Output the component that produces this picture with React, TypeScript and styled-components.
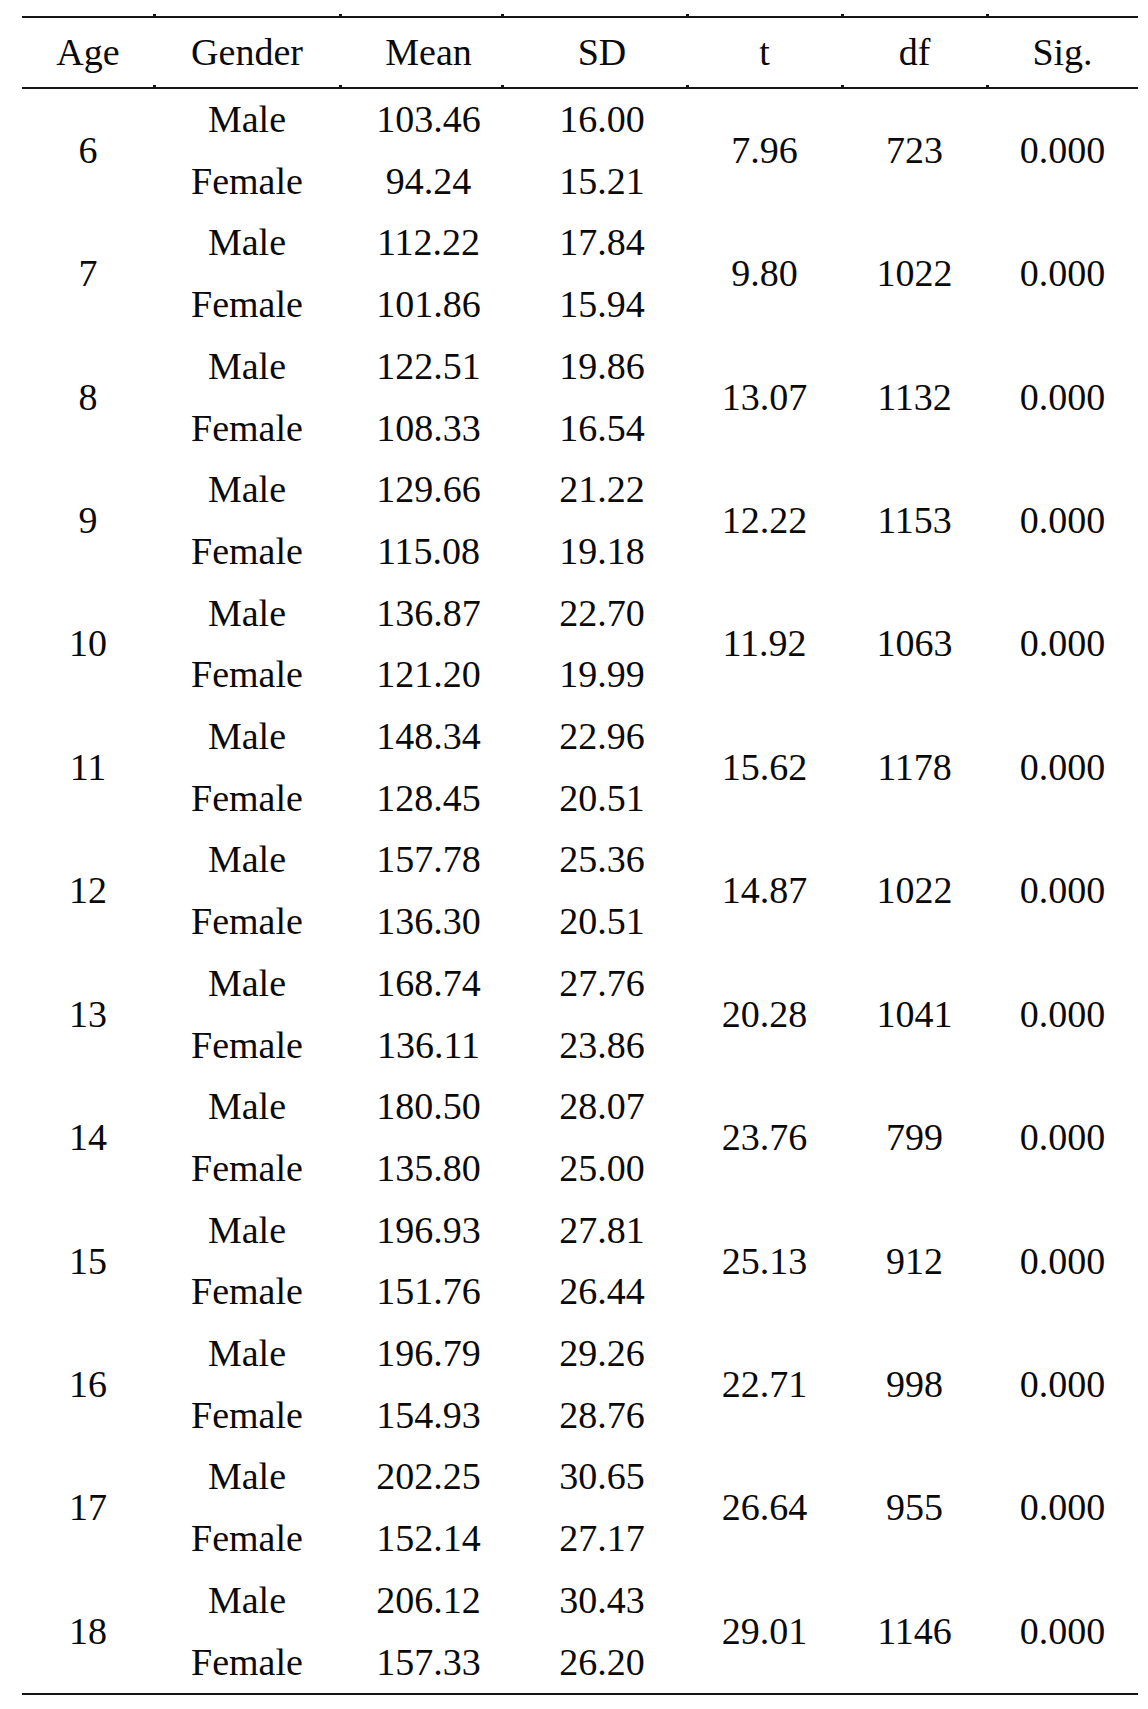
import styled, { createGlobalStyle } from "styled-components"

const GlobalStyle = createGlobalStyle`
    html, body {
        margin: 0;
        padding: 0;
        background: #ffffff;
    }
`

const Page = styled.div`
    padding: 16px 0 0 22px;
    font-family: "Liberation Serif", "Times New Roman", serif;
    color: #0a0a0a;
`

const Table = styled.table`
    width: 1116px;
    table-layout: fixed;
    border-collapse: separate;
    border-spacing: 0;
    font-size: 38px;
`

const HeadCell = styled.th<{ $tick?: boolean; $shift?: number }>`
    position: relative;
    height: 69px;
    padding: 0 0 0 ${p => p.$shift ?? 0}px;
    font-weight: normal;
    text-align: center;
    line-height: 69px;
    border-top: 2px solid #151515;
    border-bottom: 2px solid #151515;

    &::before, &::after {
        content: "";
        display: ${p => (p.$tick ? "block" : "none")};
        position: absolute;
        left: -1px;
        width: 3px;
        height: 2px;
        background: #151515;
    }
    &::before { top: -4px; }
    &::after { bottom: 0; }
`

const Cell = styled.td<{ $tick?: boolean; $last?: boolean; $shift?: number }>`
    position: relative;
    height: 61.7px;
    padding: 0 0 0 ${p => p.$shift ?? 0}px;
    text-align: center;
    vertical-align: middle;
    line-height: 61.7px;
    border-bottom: ${p => (p.$last ? "2px solid #151515" : "none")};

    &::after {
        content: "";
        display: ${p => (p.$tick && p.$last ? "block" : "none")};
        position: absolute;
        left: -1px;
        bottom: -4px;
        width: 3px;
        height: 2px;
        background: #151515;
    }
`

const widths = [132, 186, 162, 185, 155, 145, 151]
const shifts = [0, 0, 15, 15, 0, 0, 0]
const headers = ["Age", "Gender", "Mean", "SD", "t", "df", "Sig."]

const data = [
    { age: 6, m: ["103.46", "16.00"], f: ["94.24", "15.21"], t: "7.96", df: "723" },
    { age: 7, m: ["112.22", "17.84"], f: ["101.86", "15.94"], t: "9.80", df: "1022" },
    { age: 8, m: ["122.51", "19.86"], f: ["108.33", "16.54"], t: "13.07", df: "1132" },
    { age: 9, m: ["129.66", "21.22"], f: ["115.08", "19.18"], t: "12.22", df: "1153" },
    { age: 10, m: ["136.87", "22.70"], f: ["121.20", "19.99"], t: "11.92", df: "1063" },
    { age: 11, m: ["148.34", "22.96"], f: ["128.45", "20.51"], t: "15.62", df: "1178" },
    { age: 12, m: ["157.78", "25.36"], f: ["136.30", "20.51"], t: "14.87", df: "1022" },
    { age: 13, m: ["168.74", "27.76"], f: ["136.11", "23.86"], t: "20.28", df: "1041" },
    { age: 14, m: ["180.50", "28.07"], f: ["135.80", "25.00"], t: "23.76", df: "799" },
    { age: 15, m: ["196.93", "27.81"], f: ["151.76", "26.44"], t: "25.13", df: "912" },
    { age: 16, m: ["196.79", "29.26"], f: ["154.93", "28.76"], t: "22.71", df: "998" },
    { age: 17, m: ["202.25", "30.65"], f: ["152.14", "27.17"], t: "26.64", df: "955" },
    { age: 18, m: ["206.12", "30.43"], f: ["157.33", "26.20"], t: "29.01", df: "1146" },
]

export default function App() {
    return (
        <Page>
            <GlobalStyle />
            <Table>
                <colgroup>
                    {widths.map((w, i) => <col key={i} style={{ width: w }} />)}
                </colgroup>
                <thead>
                    <tr>
                        {headers.map((h, i) => (
                            <HeadCell key={h} $tick={i > 0} $shift={shifts[i]}>{h}</HeadCell>
                        ))}
                    </tr>
                </thead>
                <tbody>
                    {data.map((row, gi) => {
                        const last = gi === data.length - 1
                        return [
                            <tr key={`${row.age}-m`}>
                                <Cell rowSpan={2} $last={last}>{row.age}</Cell>
                                <Cell>Male</Cell>
                                <Cell $shift={15}>{row.m[0]}</Cell>
                                <Cell $shift={15}>{row.m[1]}</Cell>
                                <Cell rowSpan={2} $tick $last={last}>{row.t}</Cell>
                                <Cell rowSpan={2} $tick $last={last}>{row.df}</Cell>
                                <Cell rowSpan={2} $tick $last={last}>0.000</Cell>
                            </tr>,
                            <tr key={`${row.age}-f`}>
                                <Cell $tick $last={last}>Female</Cell>
                                <Cell $tick $last={last} $shift={15}>{row.f[0]}</Cell>
                                <Cell $tick $last={last} $shift={15}>{row.f[1]}</Cell>
                            </tr>,
                        ]
                    })}
                </tbody>
            </Table>
        </Page>
    )
}
